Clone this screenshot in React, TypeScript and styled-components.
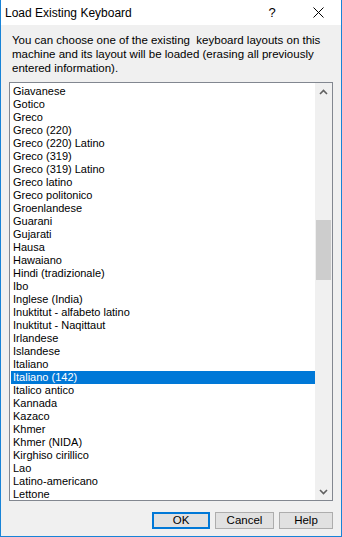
import React from "react";
import styled, { createGlobalStyle } from "styled-components";

const GlobalStyle = createGlobalStyle`
  html, body {
    margin: 0;
    padding: 0;
    background: #ffffff;
  }
  * {
    box-sizing: border-box;
  }
`;

const Window = styled.div`
  width: 342px;
  height: 537px;
  display: flex;
  flex-direction: column;
  border: 1px solid #1883d7;
  border-top: none;
  background: #f0f0f0;
  font-family: "Liberation Sans", Arial, sans-serif;
  font-size: 11px;
  color: #000;
`;

const TitleBar = styled.div`
  height: 25px;
  display: flex;
  align-items: center;
  background: #ffffff;
  padding-left: 4px;
`;

const Title = styled.div`
  flex: 1;
  font-size: 12px;
  white-space: nowrap;
`;

const CaptionButton = styled.div`
  width: 46px;
  height: 25px;
  display: flex;
  align-items: center;
  justify-content: center;
  font-size: 13px;
  color: #000;
`;

const Body = styled.div`
  flex: 1;
  display: flex;
  flex-direction: column;
  padding: 8px 8px 6px 8px;
`;

const Message = styled.p`
  margin: 0 0 7px 3px;
  line-height: 14px;
  font-size: 11.5px;
  white-space: pre-wrap;
`;

const ListBox = styled.div`
  height: 419px;
  display: flex;
  border: 1px solid #828790;
  background: #ffffff;
`;

const Items = styled.div`
  flex: 1;
  padding: 2px 0 0 1px;
  overflow: hidden;
`;

const Item = styled.div<{ $selected?: boolean }>`
  height: 13px;
  line-height: 13px;
  padding-left: 2px;
  white-space: nowrap;
  background: ${(p) => (p.$selected ? "#0078d7" : "transparent")};
  color: ${(p) => (p.$selected ? "#ffffff" : "#000000")};
`;

const ScrollBar = styled.div`
  width: 17px;
  display: flex;
  flex-direction: column;
  background: #f0f0f0;
`;

const Arrow = styled.div`
  height: 17px;
  display: flex;
  align-items: center;
  justify-content: center;
`;

const Track = styled.div`
  flex: 1;
  display: flex;
  flex-direction: column;
  padding: 120px 1px 0;
`;

const Thumb = styled.div`
  height: 60px;
  background: #cdcdcd;
`;

const Footer = styled.div`
  display: flex;
  justify-content: flex-end;
  gap: 5px;
  margin-top: 11px;
`;

const Button = styled.button<{ $default?: boolean; $width: number }>`
  width: ${(p) => p.$width}px;
  height: 17px;
  padding: 0;
  font-family: "Liberation Sans", Arial, sans-serif;
  font-size: 11.5px;
  color: #000;
  background: #e1e1e1;
  border: ${(p) => (p.$default ? "2px solid #0078d7" : "1px solid #adadad")};
  line-height: 13px;
`;

const items = [
  "Giavanese",
  "Gotico",
  "Greco",
  "Greco (220)",
  "Greco (220) Latino",
  "Greco (319)",
  "Greco (319) Latino",
  "Greco latino",
  "Greco politonico",
  "Groenlandese",
  "Guarani",
  "Gujarati",
  "Hausa",
  "Hawaiano",
  "Hindi (tradizionale)",
  "Ibo",
  "Inglese (India)",
  "Inuktitut - alfabeto latino",
  "Inuktitut - Naqittaut",
  "Irlandese",
  "Islandese",
  "Italiano",
  "Italiano (142)",
  "Italico antico",
  "Kannada",
  "Kazaco",
  "Khmer",
  "Khmer (NIDA)",
  "Kirghiso cirillico",
  "Lao",
  "Latino-americano",
  "Lettone",
];

const Chevron = ({ up }: { up?: boolean }) => (
  <svg width="9" height="6" viewBox="0 0 9 6">
    <path
      d={up ? "M1 5 L4.5 1.5 L8 5" : "M1 1 L4.5 4.5 L8 1"}
      fill="none"
      stroke="#606060"
      strokeWidth="1.6"
    />
  </svg>
);

export default function App() {
  return (
    <>
      <GlobalStyle />
      <Window>
        <TitleBar>
          <Title>Load Existing Keyboard</Title>
          <CaptionButton>?</CaptionButton>
          <CaptionButton>
            <svg width="11" height="11" viewBox="0 0 11 11">
              <path d="M0.5 0.5 L10.5 10.5 M10.5 0.5 L0.5 10.5" stroke="#000" strokeWidth="1" />
            </svg>
          </CaptionButton>
        </TitleBar>
        <Body>
          <Message>
            You can choose one of the existing  keyboard layouts on this machine and its layout will be loaded (erasing all previously entered information).
          </Message>
          <ListBox>
            <Items>
              {items.map((name) => (
                <Item key={name} $selected={name === "Italiano (142)"}>
                  {name}
                </Item>
              ))}
            </Items>
            <ScrollBar>
              <Arrow>
                <Chevron up />
              </Arrow>
              <Track>
                <Thumb />
              </Track>
              <Arrow>
                <Chevron />
              </Arrow>
            </ScrollBar>
          </ListBox>
          <Footer>
            <Button $default $width={58}>OK</Button>
            <Button $width={59}>Cancel</Button>
            <Button $width={54}>Help</Button>
          </Footer>
        </Body>
      </Window>
    </>
  );
}
